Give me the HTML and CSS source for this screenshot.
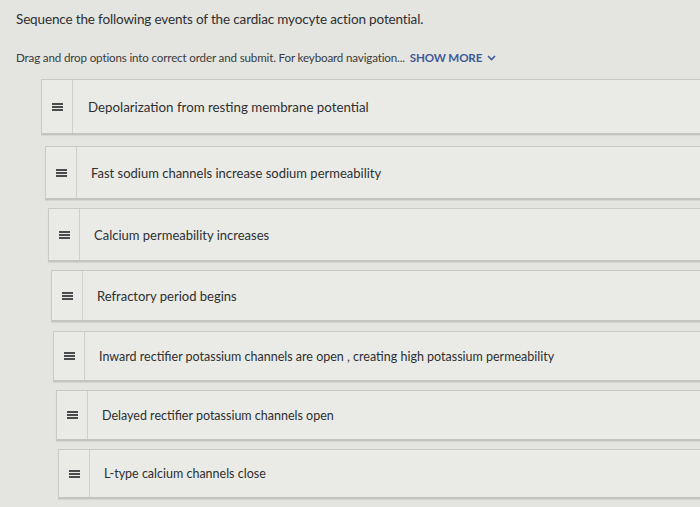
FILE: index.html
```html
<!DOCTYPE html>
<html>
<head>
<meta charset="utf-8">
<link rel="stylesheet" href="styles.css">
</head>
<body>
<div class="page">
  <h1 class="title">Sequence the following events of the cardiac myocyte action potential.</h1>
  <p class="hint">Drag and drop options into correct order and submit. For keyboard navigation... <span class="more">SHOW MORE <svg class="chev" width="9" height="6" viewBox="0 0 9 6"><path d="M1 1 L4.5 4.5 L8 1" fill="none" stroke="#3d5a98" stroke-width="1.6"/></svg></span></p>
  <ol class="list">
    <li class="item i1"><span class="handle"><span class="bars"></span></span><span class="label">Depolarization from resting membrane potential</span></li>
    <li class="item i2"><span class="handle"><span class="bars"></span></span><span class="label">Fast sodium channels increase sodium permeability</span></li>
    <li class="item i3"><span class="handle"><span class="bars"></span></span><span class="label">Calcium permeability increases</span></li>
    <li class="item i4"><span class="handle"><span class="bars"></span></span><span class="label">Refractory period begins</span></li>
    <li class="item i5"><span class="handle"><span class="bars"></span></span><span class="label">Inward rectifier potassium channels are open , creating high potassium permeability</span></li>
    <li class="item i6"><span class="handle"><span class="bars"></span></span><span class="label">Delayed rectifier potassium channels open</span></li>
    <li class="item i7"><span class="handle"><span class="bars"></span></span><span class="label">L-type calcium channels close</span></li>
  </ol>
</div>
</body>
</html>
```
FILE: styles.css
```css
html, body {
  margin: 0;
  padding: 0;
  background: #e4e5e1;
  overflow: hidden;
}
.page {
  width: 700px;
  height: 507px;
  overflow: hidden;
  font-family: Lato, "Open Sans", sans-serif;
  color: #2e2f30;
  padding: 10px 0 0 16px;
  box-sizing: border-box;
}
.title {
  margin: 0;
  font-size: 13.5px;
  font-weight: 400;
  line-height: 18px;
  letter-spacing: -0.15px;
}
.hint {
  margin: 22px 0 0 0;
  font-size: 11.6px;
  line-height: 16px;
  letter-spacing: -0.15px;
  color: #3a3b3c;
}
.more {
  color: #3d5a98;
  font-weight: 700;
  margin-left: 2px;
}
.chev {
  margin-left: 2px;
  vertical-align: 1px;
}
.list {
  list-style: none;
  margin: 13px 0 0 25px;
  padding: 0;
  display: flex;
  flex-direction: column;
  gap: 8px;
}
.item {
  display: flex;
  align-items: stretch;
  width: 700px;
  flex: none;
  background: #eaebe7;
  border: 1px solid #c9cac6;
  border-bottom: 2px solid #c3c4c0;
  box-sizing: border-box;
  box-shadow: 0 1px 1px rgba(0,0,0,0.06);
}
.handle {
  width: 30px;
  flex: none;
  border-right: 1px solid #cfd0cc;
  display: flex;
  align-items: center;
  justify-content: center;
}
.bars {
  width: 11px;
  height: 2px;
  background: #4a4b4c;
  box-shadow: 0 -3px 0 #4a4b4c, 0 3px 0 #4a4b4c;
}
.label {
  display: flex;
  align-items: center;
  padding-left: 14px;
  font-size: 13px;
}
.i1 { height: 56px; }
.i1 .label { font-size: 13.3px; padding-left: 15px; }
.i2 { margin-left: 4px; height: 54px; margin-top: 3px; }
.i3 { margin-left: 7px; height: 54px; }
.i4 { margin-left: 10px; height: 52px; }
.i5 { margin-left: 12px; height: 51px; margin-top: 1px; }
.i6 { margin-left: 15px; height: 51px; }
.i7 { margin-left: 17px; height: 50px; }
.i5 .label, .i6 .label, .i7 .label { font-size: 12.5px; }
```
